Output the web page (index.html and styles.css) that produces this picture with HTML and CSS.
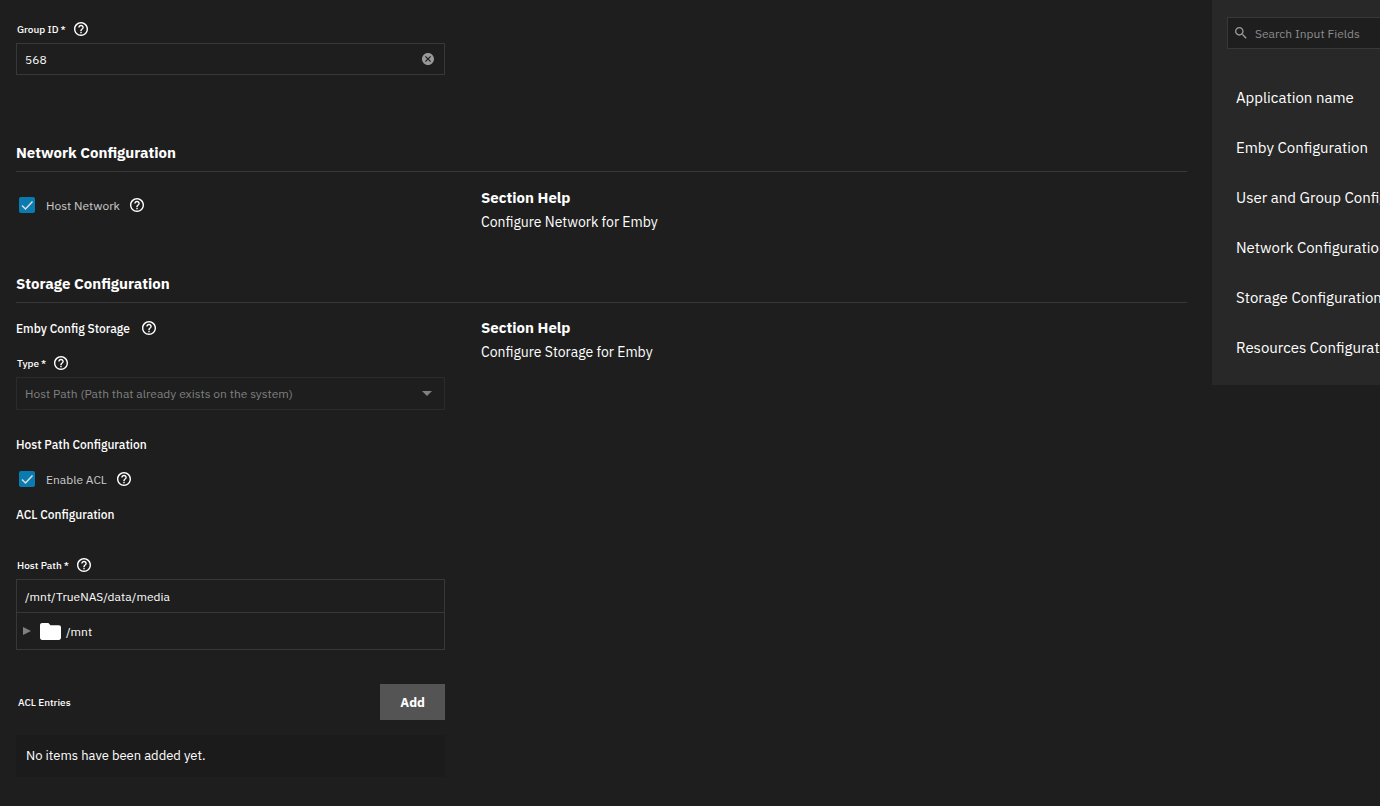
FILE: index.html
```html
<!DOCTYPE html>
<html lang="en">
<head>
    <meta charset="UTF-8">
    <meta name="viewport" content="width=device-width, initial-scale=1.0">
    <title>Install Emby</title>
    <link rel="stylesheet" href="styles.css">
</head>
<body>
    <svg class="sprite" aria-hidden="true">
        <symbol id="help" viewBox="2 2 20 20">
            <path d="M11 18h2v-2h-2v2zm1-16C6.48 2 2 6.48 2 12s4.480 10 10 10 10-4.480 10-10S17.520 2 12 2zm0 18c-4.410 0-8-3.590-8-8s3.590-8 8-8 8 3.590 8 8-3.590 8-8 8zm0-14c-2.210 0-4 1.790-4 4h2c0-1.100.9-2 2-2s2 .9 2 2c0 2-3 1.750-3 5h2c0-2.250 3-2.500 3-5 0-2.210-1.790-4-4-4z"/>
        </symbol>
    </svg>

    <div class="page">
        <main class="form">
            <section class="section section-user">
                <div class="fields">
                    <div class="label-row">
                        <label for="group-id">Group ID<span class="required">*</span></label>
                        <button type="button" class="help" aria-label="Help"><svg><use href="#help"/></svg></button>
                    </div>
                    <div class="input-box">
                        <input type="text" id="group-id" value="568">
                        <button type="button" class="clear" aria-label="Clear">
                            <svg viewBox="2 2 20 20"><path d="M12 2C6.470 2 2 6.470 2 12s4.470 10 10 10 10-4.470 10-10S17.530 2 12 2zm5 13.590L15.590 17 12 13.410 8.410 17 7 15.590 10.590 12 7 8.410 8.410 7 12 10.590 15.590 7 17 8.410 13.410 12 17 15.590z"/></svg>
                        </button>
                    </div>
                </div>
            </section>

            <section class="section section-network">
                <h2>Network Configuration</h2>
                <div class="columns">
                    <div class="fields">
                        <div class="check-row">
                            <input type="checkbox" id="host-network" checked>
                            <label for="host-network">Host Network</label>
                            <button type="button" class="help" aria-label="Help"><svg><use href="#help"/></svg></button>
                        </div>
                    </div>
                    <div class="section-help">
                        <h3>Section Help</h3>
                        <p>Configure Network for Emby</p>
                    </div>
                </div>
            </section>

            <section class="section">
                <h2>Storage Configuration</h2>
                <div class="columns">
                    <div class="fields">
                        <div class="group-title">
                            <h4>Emby Config Storage</h4>
                            <button type="button" class="help" aria-label="Help"><svg><use href="#help"/></svg></button>
                        </div>
                        <div class="label-row label-type">
                            <label for="type">Type<span class="required">*</span></label>
                            <button type="button" class="help" aria-label="Help"><svg><use href="#help"/></svg></button>
                        </div>
                        <div class="select-box">
                            <select id="type" disabled>
                                <option>Host Path (Path that already exists on the system)</option>
                            </select>
                        </div>

                        <h4 class="group-title group-path">Host Path Configuration</h4>
                        <div class="check-row check-acl">
                            <input type="checkbox" id="enable-acl" checked>
                            <label for="enable-acl">Enable ACL</label>
                            <button type="button" class="help" aria-label="Help"><svg><use href="#help"/></svg></button>
                        </div>
                        <h4 class="group-title">ACL Configuration</h4>

                        <div class="label-row label-path">
                            <label for="host-path">Host Path<span class="required">*</span></label>
                            <button type="button" class="help" aria-label="Help"><svg><use href="#help"/></svg></button>
                        </div>
                        <div class="explorer">
                            <input type="text" id="host-path" value="/mnt/TrueNAS/data/media">
                            <div class="tree-node">
                                <button type="button" class="toggle" aria-label="Expand /mnt">
                                    <svg viewBox="0 0 8 8"><path d="M0 0l8 4-8 4z"/></svg>
                                </button>
                                <svg class="folder" viewBox="2 4 20 16"><path d="M10 4H4c-1.100 0-2 .9-2 2v12c0 1.100.9 2 2 2h16c1.100 0 2-.9 2-2V8c0-1.100-.9-2-2-2h-8l-2-2z"/></svg>
                                <span>/mnt</span>
                            </div>
                        </div>

                        <div class="list-header">
                            <span>ACL Entries</span>
                            <button type="button" class="btn">Add</button>
                        </div>
                        <div class="list-empty">No items have been added yet.</div>
                    </div>
                    <div class="section-help">
                        <h3>Section Help</h3>
                        <p>Configure Storage for Emby</p>
                    </div>
                </div>
            </section>
        </main>

        <aside class="sidebar">
            <div class="search">
                <svg viewBox="3 3 18 18"><path d="M15.500 14h-.79l-.28-.27C15.410 12.590 16 11.110 16 9.500 16 5.910 13.090 3 9.500 3S3 5.910 3 9.500 5.910 16 9.500 16c1.610 0 3.090-.59 4.230-1.570l.27.28v.79l5 4.990L20.490 19l-4.990-5zm-6 0C7.010 14 5 11.990 5 9.500S7.010 5 9.500 5 14 7.010 14 9.500 11.990 14 9.500 14z"/></svg>
                <input type="search" placeholder="Search Input Fields" aria-label="Search Input Fields">
            </div>
            <nav>
                <a href="#">Application name</a>
                <a href="#">Emby Configuration</a>
                <a href="#">User and Group Configuration</a>
                <a href="#">Network Configuration</a>
                <a href="#">Storage Configuration</a>
                <a href="#">Resources Configuration</a>
            </nav>
        </aside>
    </div>
</body>
</html>
```
FILE: styles.css
```css
* {
    margin: 0;
    padding: 0;
    box-sizing: border-box;
}

body {
    font-family: "IBM Plex Sans", "Noto Sans", sans-serif;
    font-size: 12px;
    background: #1e1e1e;
    color: #fff;
    overflow-x: hidden;
}

button,
input,
select {
    font: inherit;
    color: inherit;
    background: none;
    border: none;
    outline: none;
}

button {
    cursor: pointer;
}

svg {
    display: block;
    fill: currentColor;
}

.sprite {
    display: none;
}

.page {
    display: grid;
    grid-template-columns: minmax(0, 1fr) 168px;
    gap: 25px;
    align-items: start;
}

/* Form */
.form {
    padding: 20px 0 28px 16px;
}

.section-user {
    margin-bottom: 66px;
}

.section-network {
    margin-bottom: 40px;
}

.section h2 {
    font-size: 15px;
    line-height: 24px;
    font-weight: 700;
    padding-bottom: 6px;
    border-bottom: 1px solid #383838;
}

.columns {
    display: grid;
    grid-template-columns: minmax(0, 429px) minmax(0, 1fr);
    gap: 36px;
    padding-top: 15px;
}

.section-network .columns {
    padding-top: 16px;
}

.section-user .fields {
    max-width: 429px;
}

.section-help {
    line-height: 20px;
}

.section-help h3 {
    font-size: 15px;
    margin-bottom: 4px;
}

.section-help p {
    font-size: 14px;
}

.label-row {
    display: flex;
    align-items: center;
    gap: 8px;
    height: 18px;
    margin-bottom: 5px;
    padding-left: 1px;
    font-size: 10px;
    font-weight: 500;
}

.required {
    margin-left: 2px;
}

.help svg {
    width: 14px;
    height: 14px;
}

.input-box {
    display: flex;
    align-items: center;
    height: 32px;
    padding: 0 10px 0 8px;
    border: 1px solid #383838;
}

.input-box input {
    flex: 1;
    min-width: 0;
}

.clear {
    color: #999;
}

.clear svg {
    width: 12px;
    height: 12px;
}

.group-title {
    display: flex;
    align-items: center;
    gap: 12px;
    height: 20px;
    font-size: 12px;
    font-weight: 500;
}

.group-title h4 {
    font-weight: 500;
}

.label-type {
    margin-top: 16px;
}

.select-box {
    display: flex;
    align-items: center;
    height: 33px;
    padding: 0 12px 0 8px;
    border: 1px solid #2b2b2b;
    color: #808080;
}

.select-box::after {
    content: "";
    border: 5px solid transparent;
    border-top-color: #808080;
    border-bottom: none;
}

.select-box select {
    flex: 1;
    min-width: 0;
    appearance: none;
    opacity: 1;
}

.group-path {
    margin-top: 24px;
}

.check-row {
    display: flex;
    align-items: center;
    gap: 10px;
    height: 34px;
    padding-left: 3px;
    color: #ccc;
}

.check-row .help {
    color: #fff;
}

.check-row input {
    width: 16px;
    height: 16px;
    margin-right: 1px;
    appearance: none;
    border-radius: 2px;
    border: 2px solid #999;
}

.check-row input:checked {
    border: none;
    background: #0a7bb0 url("data:image/svg+xml,%3Csvg xmlns='http://www.w3.org/2000/svg' viewBox='0 0 16 16'%3E%3Cpath d='M3 8.500l3.500 3.500L13.500 4.500' fill='none' stroke='%23ddd' stroke-width='1.500'/%3E%3C/svg%3E");
}

.check-acl {
    margin: 8px 0;
}

.label-path {
    margin-top: 32px;
}

.explorer {
    border: 1px solid #383838;
}

.explorer input {
    display: block;
    width: 100%;
    height: 33px;
    padding: 0 8px;
    border-bottom: 1px solid #383838;
}

.tree-node {
    display: flex;
    align-items: center;
    height: 36px;
    padding-left: 6px;
}

.toggle {
    color: #808080;
    margin-right: 9px;
}

.toggle svg {
    width: 8px;
    height: 8px;
}

.folder {
    width: 21px;
    height: 17px;
    margin-right: 5px;
}

.list-header {
    display: flex;
    align-items: center;
    justify-content: space-between;
    margin: 34px 0 15px;
    padding-left: 2px;
    font-size: 10px;
    font-weight: 500;
}

.btn {
    height: 36px;
    padding: 0 20px;
    background: #545454;
    font-size: 13px;
    font-weight: 700;
}

.list-empty {
    padding: 12px 10px;
    background: #1b1b1b;
    font-size: 13px;
    line-height: 18px;
}

/* Sidebar */
.sidebar {
    padding: 17px 0 12px 15px;
    background: #282828;
    overflow: hidden;
}

.search {
    display: flex;
    align-items: center;
    gap: 8px;
    height: 32px;
    margin-bottom: 24px;
    padding-left: 7px;
    border: 1px solid #383838;
    border-right: none;
    background: #1e1e1e;
    color: #999;
}

.search svg {
    flex: none;
    width: 12px;
    height: 12px;
}

.search input {
    flex: 1;
    min-width: 0;
}

.search input::placeholder {
    color: #8c8c8c;
}

.sidebar nav a {
    display: block;
    padding-left: 9px;
    font-size: 15px;
    line-height: 50px;
    color: #fff;
    text-decoration: none;
    white-space: nowrap;
}
```
